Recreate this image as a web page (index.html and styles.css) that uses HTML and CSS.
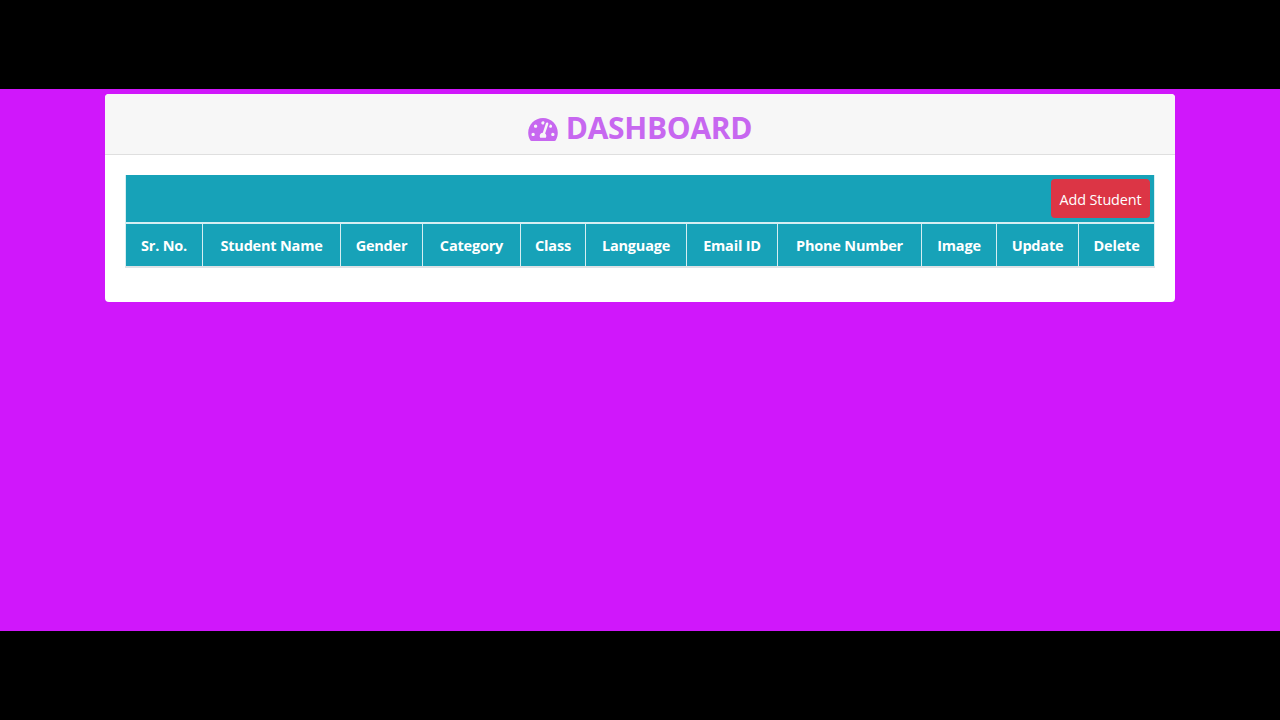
FILE: index.html
```html
<!DOCTYPE html>
<html lang="en">
	<head>
		<meta charset="utf-8" />
		<title>Dashboard</title>
		<link rel="stylesheet" href="styles.css">
	</head>
	<body>
		<div class="bar"></div>
		<main class="stage">
			<div class="card">
				<div class="card-header">
					<h1 class="title">
						<svg class="icon" viewBox="0 32 576 448">
							<path d="M288 32C128.94 32 0 160.94 0 320c0 52.8 14.25 102.26 39.06 144.8 5.61 9.62 16.3 15.2 27.44 15.2h443c11.14 0 21.83-5.58 27.44-15.2C561.75 422.26 576 372.8 576 320c0-159.06-128.94-288-288-288zm0 64c14.71 0 26.58 10.13 30.32 23.65-1.11 2.26-2.64 4.23-3.45 6.67l-9.22 27.67c-5.13 3.49-10.97 6.01-17.64 6.01-17.67 0-32-14.33-32-32S270.33 96 288 96zM96 384c-17.67 0-32-14.33-32-32s14.33-32 32-32 32 14.33 32 32-14.33 32-32 32zm48-160c-17.67 0-32-14.33-32-32s14.33-32 32-32 32 14.33 32 32-14.33 32-32 32zm246.77-72.41l-61.33 184C343.13 347.33 352 364.54 352 384c0 11.72-3.38 22.55-8.88 32H232.88c-5.5-9.45-8.88-20.28-8.88-32 0-33.94 26.5-61.43 59.9-63.59l61.34-184.01c4.17-12.56 17.73-19.45 30.36-15.17 12.57 4.19 19.35 17.79 15.17 30.36zm14.66 57.2l15.52-46.55c3.47-1.29 7.13-2.23 11.05-2.23 17.67 0 32 14.33 32 32s-14.33 32-32 32c-11.38-.01-20.89-6.28-26.57-15.22zM480 384c-17.67 0-32-14.33-32-32s14.33-32 32-32 32 14.33 32 32-14.33 32-32 32z"/>
						</svg>
						<span>DASHBOARD</span>
					</h1>
				</div>
				<div class="card-body">
					<table class="students">
						<colgroup>
							<col class="c-no">
							<col class="c-name">
							<col class="c-gender">
							<col class="c-category">
							<col class="c-class">
							<col class="c-language">
							<col class="c-email">
							<col class="c-phone">
							<col class="c-image">
							<col class="c-update">
							<col class="c-delete">
						</colgroup>
						<thead>
							<tr>
								<td colspan="11" class="toolbar">
									<button type="button" class="btn-add">Add Student</button>
								</td>
							</tr>
							<tr class="head-row">
								<th>Sr. No.</th>
								<th>Student Name</th>
								<th>Gender</th>
								<th>Category</th>
								<th>Class</th>
								<th>Language</th>
								<th>Email ID</th>
								<th>Phone Number</th>
								<th>Image</th>
								<th>Update</th>
								<th>Delete</th>
							</tr>
						</thead>
					</table>
				</div>
			</div>
		</main>
		<div class="bar"></div>
	</body>
</html>
```

FILE: styles.css
```css
* {
	box-sizing: border-box;
}

html, body {
	height: 100%;
}

body {
	margin: 0;
	display: flex;
	flex-direction: column;
	background-color: #000;
	font-family: "Open Sans", "Noto Sans", sans-serif;
	overflow: hidden;
}

.bar {
	height: 89px;
	flex: none;
	background-color: #000;
}

.stage {
	flex: 1;
	padding: 5px 105px 0;
	background-color: #d017fb;
}

.card {
	background-color: #fff;
	border-radius: 4px;
	overflow: hidden;
}

.card-header {
	height: 61px;
	padding-top: 7px;
	display: flex;
	align-items: center;
	justify-content: center;
	background-color: #f7f7f7;
	border-bottom: 1px solid #dfdfdf;
}

.title {
	margin: 0;
	display: flex;
	align-items: center;
	gap: 8px;
	font-size: 30px;
	font-weight: 700;
	line-height: 1;
	letter-spacing: -0.3px;
	color: #c767f0;
}

.icon {
	width: 30px;
	height: 23px;
	margin-top: 4px;
	fill: currentColor;
}

.card-body {
	height: 147px;
	padding: 20px;
}

.students {
	width: 1029px;
	table-layout: fixed;
	border-collapse: collapse;
	background-color: #17a2b8;
	color: #fff;
}

.c-no { width: 77px; }
.c-name { width: 138px; }
.c-gender { width: 82px; }
.c-category { width: 98px; }
.c-class { width: 65px; }
.c-language { width: 101px; }
.c-email { width: 91px; }
.c-phone { width: 144px; }
.c-image { width: 75px; }
.c-update { width: 82px; }
.c-delete { width: 76px; }

.toolbar {
	height: 48px;
	padding: 4px 4px 4px 4px;
	text-align: right;
	border-left: 1px solid #d5eef2;
	border-right: 1px solid #d5eef2;
	border-bottom: 2px solid #d5eef2;
}

.btn-add {
	width: 99px;
	height: 39px;
	padding: 2px 0 0;
	border: none;
	border-radius: 4px;
	background-color: #dc3545;
	color: #fff;
	font-family: inherit;
	font-size: 14.4px;
	letter-spacing: -0.1px;
	vertical-align: top;
}

.head-row th {
	height: 44px;
	padding: 0;
	font-size: 14.5px;
	font-weight: 700;
	letter-spacing: -0.2px;
	text-align: center;
	border-left: 1px solid #d5eef2;
	border-bottom: 2px solid #dee2e6;
}

.head-row th:last-child {
	border-right: 1px solid #d5eef2;
}
```
